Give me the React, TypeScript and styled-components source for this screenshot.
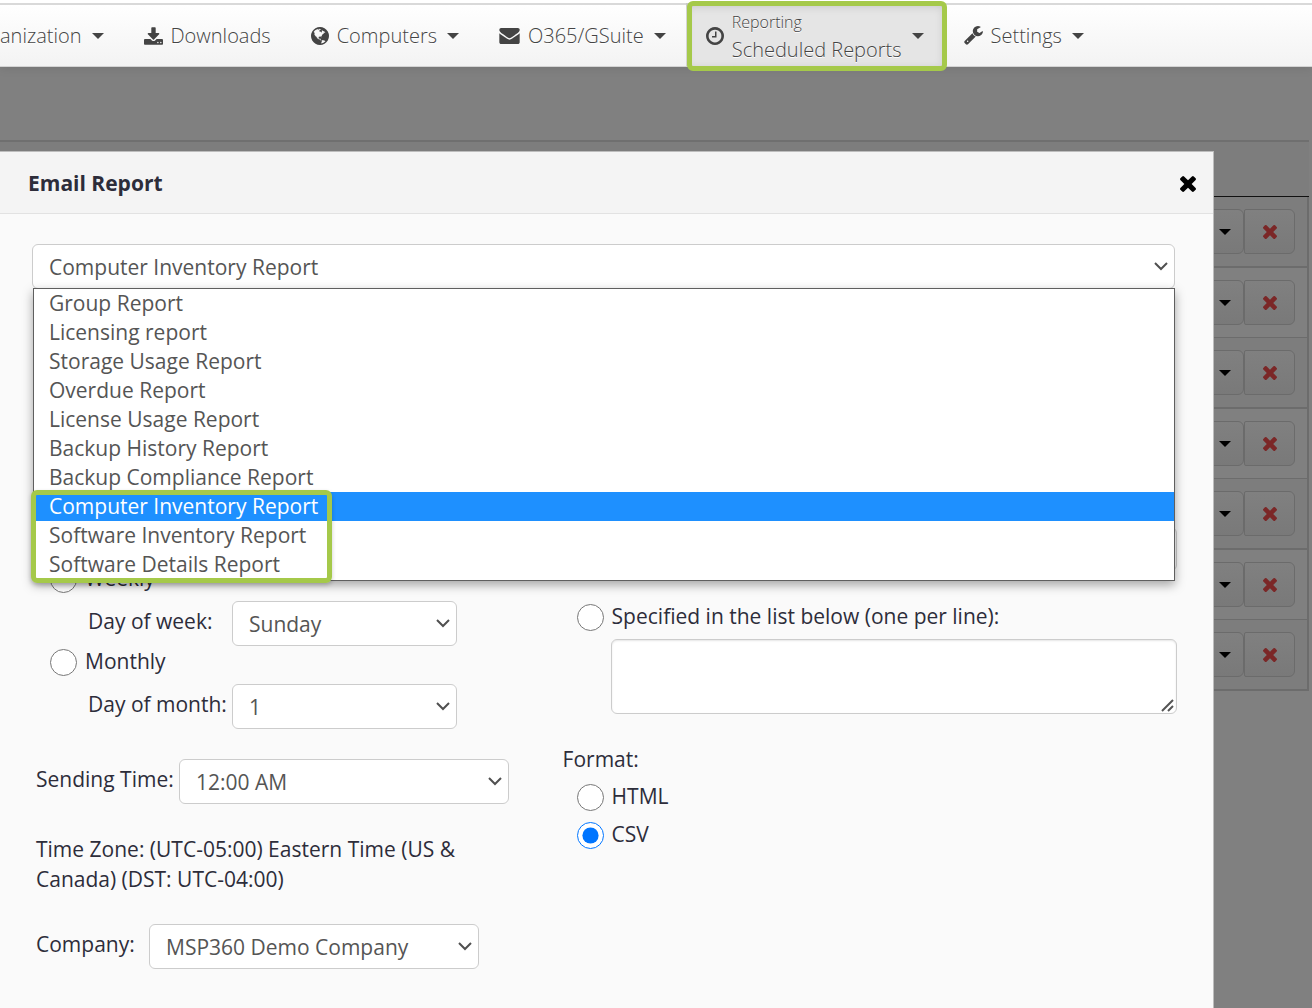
import React from "react";
import styled, { createGlobalStyle, css } from "styled-components";

const GlobalStyle = createGlobalStyle`
  *, *::before, *::after { box-sizing: border-box; }
  body { margin: 0; background: #808080; }
  body, button, input, select, textarea {
    font-family: "Open Sans", "Noto Sans", sans-serif;
    font-size: 21px;
  }
`;

const ICONS = {
  download:
    "M1344 1344q0-26-19-45t-45-19-45 19-19 45 19 45 45 19 45-19 19-45zm256 0q0-26-19-45t-45-19-45 19-19 45 19 45 45 19 45-19 19-45zm128-224v320q0 40-28 68t-68 28h-1472q-40 0-68-28t-28-68v-320q0-40 28-68t68-28h465l135 136q58 56 136 56t136-56l136-136h464q40 0 68 28t28 68zm-325-569q17 41-14 70l-448 448q-18 19-45 19t-45-19l-448-448q-31-29-14-70 17-39 59-39h256v-448q0-26 19-45t45-19h256q26 0 45 19t19 45v448h256q42 0 59 39z",
  globe:
    "M896 128q209 0 385.5 103t279.5 279.5 103 385.5-103 385.5-279.5 279.5-385.5 103-385.5-103-279.5-279.5-103-385.5 103-385.5 279.5-279.5 385.5-103zm274 521q-2 1-9.5 9.5t-13.5 9.5q2 0 4.5-5t5-11 3.5-7q6-7 22-15 14-6 52-12 34-8 51 11-2-2 9.5-13t14.5-12q3-2 15-4.5t15-7.5l2-22q-12 1-17.5-7t-6.5-21q0 2-6 8 0-7-4.5-8t-11.5 1-9 1q-10-3-15-7.5t-8-16.5-4-15q-2-5-9.5-11t-9.5-10q-1-2-2.5-5.5t-3-6.5-4-5.5-5.5-2.5-7 5-7.5 10-4.5 5q-3-2-6-1.5t-4.5 1-4.5 3-5 3.5q-3 2-8.5 3t-8.5 2q15-5-1-11-10-4-16-3 9-4 7.5-12t-8.5-14h5q-1-4-8.5-8.5t-17.5-8.5-13-6q-8-5-34-9.5t-33-.5q-5 6-4.5 10.5t4 14 3.5 12.5q1 6-5.5 13t-6.5 12q0 7 14 15.5t10 21.5q-3 8-16 16t-16 12q-5 8-1.5 18.5t10.5 16.5q2 2 1.5 4t-3.5 4.5-5.5 4-6.5 3.5l-3 2q-11 5-20.5-6t-13.5-26q-7-25-16-30-23-8-29 1-5-13-41-26-25-9-58-4 6-1 0-15-7-15-19-12 3-6 4-17.5t1-13.5q3-13 12-23 1-1 7-8.5t9.5-13.5.5-6q35 4 50-11 5-5 11.5-17t10.5-17q9-6 14-5.5t14.5 5.5 14.5 5q14 1 15.5-11t-7.5-20q12 1 3-17-4-7-8-9-12-4-27 5-8 4 2 8-1-1-9.5 10.5t-16.5 17.5-16-5q-1-1-5.5-13.5t-9.5-13.5q-8 0-16 15 3-8-11-15t-24-8q19-12-8-27-7-4-20.5-5t-19.5 4q-5 7-5.5 11.5t5 8 10.5 5.5 11.5 4 8.5 3q14 10 8 14-2 1-8.5 3.5t-11.5 4.5-6 4q-3 4 0 14t-2 14q-5-5-9-17.5t-7-16.5q7 9-25 6l-10-1q-4 0-16 2t-20.5 1-13.5-8q-4-8 0-20 1-4 4-2-4-3-11-9.5t-10-8.5q-46 15-94 41 6 1 12-1 5-2 13-6.5t10-5.5q34-14 42-7l5-5q14 16 20 25-7-4-30-1-20 6-22 12 7 12 5 18-4-3-11.5-10t-14.5-11-15-5q-16 0-22 1-146 80-235 222 7 7 12 8 4 1 5 9t2.5 11 11.5-3q9 8 3 19 1-1 44 27 19 17 21 21 3 11-10 18-1-2-9-9t-9-4q-3 5 .5 18.5t10.5 12.5q-7 0-9.5 16t-2.5 35.5-1 23.5l2 1q-3 12 5.5 34.5t21.5 19.5q-13 3 20 43 6 8 8 9 3 2 12 7.5t15 10 10 10.5q4 5 10 22.5t14 23.5q-2 6 9.5 20t10.5 23q-1 0-2.5 1t-2.5 1q3 7 15.5 14t15.5 13q1 3 2 10t3 11 8 2q2-20-24-62-15-25-17-29-3-5-5.5-15.5t-4.5-14.5q2 0 6 1.5t8.5 3.5 7.5 4 2 3q-3 7 2 17.5t12 18.5 17 19 12 13q6 6 14 19.5t0 13.5q9 0 20 10.5t17 19.5q5 8 8 26t5 24q2 7 8.5 13.5t12.5 9.5l16 8 13 7q5 2 18.5 10.5t21.5 11.5q10 4 16 4t14.5-2.5 13.5-3.5q15-2 29 15t21 21q36 19 55 11-2 1 .5 7.5t8 15.5 9 14.5 5.5 8.5q5 6 18 15t18 15q6-4 7-9-3 8 7 20t18 10q14-3 14-32-31 15-49-18 0-1-2.5-5.5t-4-8.5-2.5-8.5 0-7.5 5-3q9 0 10-3.5t-2-12.5-4-13q-1-8-11-20t-12-15q-5 9-16 8t-16-9q0 1-1.5 5.5t-1.5 6.5q-13 0-15-1 1-3 2.5-17.5t3.5-22.5q1-4 5.5-12t7.5-14.5 4-12.5-4.5-9.5-17.5-2.5q-19 1-26 20-1 3-3 10.5t-5 11.5-9 7q-7 3-24 2t-24-5q-13-8-22.5-29t-9.5-37q0-10 2.5-26.5t3-25-5.5-24.5q3-2 9-9.5t10-10.5q2-1 4.5-1.5t4.5 0 4-1.5 3-6q-1-1-4-3-3-3-4-3 7 3 28.5-1.5t27.5 1.5q15 11 22-2 0-1-2.5-9.5t-.5-13.5q5 27 29 9 3 3 15.5 5t17.5 5q3 2 7 5.5t5.5 4.5 5-.5 8.5-6.5q10 14 12 24 11 40 19 44 7 3 11 2t4.5-9.5 0-14-1.5-12.5l-1-8v-18l-1-8q-15-3-18.5-12t1.5-18.5 15-18.5q1-1 8-3.5t15.5-6.5 12.5-8q21-19 15-35 7 0 11-9-1 0-5-3t-7.5-5-4.5-2q9-5 2-16 5-3 7.5-11t7.5-10q9 12 21 2 8-8 1-16 5-7 20.5-10.5t18.5-9.5q7 2 8-2t1-12 3-12q4-5 15-9t13-5l17-11q3-4 0-4 18 2 31-11 10-11-6-20 3-6-3-9.5t-15-5.5q3-1 11.5-.5t10.5-1.5q15-10-7-16-17-5-43 12zm-163 877q206-36 351-189-3-3-12.5-4.5t-12.5-3.5q-18-7-24-8 1-7-2.5-13t-8-9-12.5-8-11-7q-2-2-7-6t-7-5.5-7.5-4.5-8.5-2-10 1l-3 1q-3 1-5.5 2.5t-5.5 3-4 3 0 2.5q-21-17-36-22-5-1-11-5.5t-10.5-7-10-1.5-11.5 7q-5 5-6 15t-2 13q-7-5 0-17.5t2-18.5q-3-6-10.5-4.5t-12 4.5-11.5 8.5-9 6.5-8.5 5.5-8.5 7.5q-3 4-6 12t-5 11q-2-4-11.5-6.5t-9.5-5.5q2 10 4 35t5 38q7 31-12 48-27 25-29 40-4 22 12 26 0 7-8 20.5t-7 21.5q0 6 2 16z",
  envelope:
    "M1792 710v794q0 66-47 113t-113 47h-1472q-66 0-113-47t-47-113v-794q44 49 101 87 362 246 497 345 57 42 92.5 65.5t94.5 48 110 24.5h2q51 0 110-24.5t94.5-48 92.5-65.5q170-123 498-345 57-39 100-87zm0-294q0 79-49 151t-122 123q-376 261-468 325-10 7-42.5 31t-54 38.5-52 32.5-57.5 27-50 9h-2q-23 0-50-9t-57.5-27-52-32.5-54-38.5-42.5-31q-91-64-262-182.5t-205-142.5q-62-42-117-115.5t-55-136.5q0-78 41.5-130t118.5-52h1472q65 0 112.5 47t47.5 113z",
  clock:
    "M1024 544v448q0 14-9 23t-23 9h-320q-14 0-23-9t-9-23v-64q0-14 9-23t23-9h224v-352q0-14 9-23t23-9h64q14 0 23 9t9 23zm416 352q0-148-73-273t-198-198-273-73-273 73-198 198-73 273 73 273 198 198 273 73 273-73 198-198 73-273zm224 0q0 209-103 385.5t-279.5 279.5-385.5 103-385.5-103-279.5-279.5-103-385.5 103-385.5 279.5-279.5 385.5-103 385.5 103 279.5 279.5 103 385.5z",
  wrench:
    "M448 1472q0-26-19-45t-45-19-45 19-19 45 19 45 45 19 45-19 19-45zm644-420l-682 682q-37 37-90 37-52 0-91-37l-106-108q-38-36-38-90 0-53 38-91l681-681q39 98 114.5 173.5t173.5 114.5zm634-435q0 39-23 106-47 134-164.5 217.5t-258.5 83.5q-185 0-316.5-131.5t-131.5-316.5 131.5-316.5 316.5-131.5q58 0 121.5 16.5t107.5 46.5q16 11 16 28t-16 28l-293 169v224l193 107q5-3 79-48.5t135.5-81 70.5-35.5q15 0 23.5 10t8.5 25z",
  times:
    "M1490 1322q0 40-28 68l-136 136q-28 28-68 28t-68-28l-294-294-294 294q-28 28-68 28t-68-28l-136-136q-28-28-28-68t28-68l294-294-294-294q-28-28-28-68t28-68l136-136q28-28 68-28t68 28l294 294 294-294q28-28 68-28t68 28l136 136q28 28 28 68t-28 68l-294 294 294 294q28 28 28 68z",
};

/* Each glyph's drawing area: x, y, width, height on the 1792 grid. */
const BOXES: Record<keyof typeof ICONS, string> = {
  download: "64 0 1664 1536",
  globe: "128 128 1536 1536",
  envelope: "0 256 1792 1408",
  clock: "128 128 1536 1536",
  wrench: "64 128 1664 1664",
  times: "302 366 1188 1188",
};

const Glyph = styled.svg`
  display: block;
  flex: none;
  fill: currentColor;
`;

function Icon({ name, width, height }: { name: keyof typeof ICONS; width: number; height: number }) {
  return (
    <Glyph width={width} height={height} viewBox={BOXES[name]} aria-hidden="true">
      <path d={ICONS[name]} />
    </Glyph>
  );
}

const Caret = styled.span`
  flex: none;
  width: 0;
  height: 0;
  border: 6px solid transparent;
  border-top-color: currentColor;
  border-bottom: 0;
`;

const Page = styled.div`
  position: relative;
  min-height: 100vh;
  overflow: hidden;
  color: #2d2d3a;
`;

const NavBar = styled.nav`
  position: relative;
  display: flex;
  height: 67px;
  border-top: 3px solid #ffffff;
  border-bottom: 1px solid #d4d4d4;
  background: linear-gradient(#ffffff, #f3f3f3);
  box-shadow: 0 1px 10px rgba(0, 0, 0, 0.1), inset 0 2px 0 #d9d9d9;
`;

const highlight = css`
  content: "";
  position: absolute;
  border: 5px solid #a5c94a;
  border-radius: 6px;
  pointer-events: none;
`;

const NavLink = styled.a<{ $active?: boolean; $first?: boolean }>`
  position: relative;
  display: flex;
  align-items: center;
  gap: 8px;
  padding: 2px 20px 0 ${(p) => (p.$first ? 0 : 20)}px;
  color: #444444;
  font-size: 20px;
  font-weight: 300;
  line-height: 28px;
  text-decoration: none;
  white-space: nowrap;
  text-shadow: 0 1px 0 #ffffff;

  ${Caret} { margin-left: 2px; }

  ${(p) =>
    p.$active &&
    css`
      background: #e5e5e5;
      box-shadow: inset 0 3px 10px rgba(0, 0, 0, 0.15);
      &::after {
        ${highlight}
        inset: -2px -3px -5px 1px;
      }
    `}
`;

const Stacked = styled.span`
  display: flex;
  flex-direction: column;
`;

const Small = styled.span`
  font-size: 16px;
`;

const ReportTable = styled.table`
  width: calc(100% - 3px);
  margin-top: 73px;
  border-collapse: separate;
  border-spacing: 0;
  border-top: 2px solid #6f6f6f;

  th {
    height: 55px;
    padding: 0;
    background: #7d7d7d;
    border-bottom: 1px solid #111111;
  }
`;

const ReportRow = styled.tr<{ $thick: boolean }>`
  background: ${(p) => (p.$thick ? "#7d7d7d" : "#808080")};

  td {
    height: ${(p) => (p.$thick ? 71 : 70)}px;
    padding: 0 12px 0 0;
    border-right: 2px solid #6c6c6c;
    border-bottom: ${(p) => (p.$thick ? 2 : 1)}px solid #6c6c6c;
  }
`;

const Actions = styled.div`
  display: flex;
  justify-content: flex-end;
`;

const RowButton = styled.button<{ $danger?: boolean }>`
  display: flex;
  align-items: center;
  justify-content: ${(p) => (p.$danger ? "center" : "flex-end")};
  width: ${(p) => (p.$danger ? 51 : 64)}px;
  height: 45px;
  padding: 0 ${(p) => (p.$danger ? 0 : 12)}px;
  border: 1px solid #6b6b6b;
  border-radius: ${(p) => (p.$danger ? "2px 6px 6px 2px" : "6px")};
  background: linear-gradient(#808080, #797979);
  color: ${(p) => (p.$danger ? "#7b2727" : "#000000")};
`;

const Dialog = styled.section`
  position: absolute;
  top: 151px;
  right: 98px;
  bottom: 0;
  left: 0;
  border: solid #bdbdbd;
  border-width: 1px 1px 0 0;
  background: #fafafa;
`;

const DialogHeader = styled.header`
  display: flex;
  align-items: center;
  justify-content: space-between;
  height: 62px;
  padding: 0 13px 0 28px;
  border-bottom: 1px solid #e2e2e2;
  background: #f4f4f4;
`;

const Title = styled.h1`
  margin: 0;
  font-size: 21px;
  font-weight: 700;
  line-height: 30px;
`;

const CloseButton = styled.button`
  padding: 6px 4px 4px;
  border: 0;
  background: none;
  color: #000000;
`;

const DialogBody = styled.form`
  padding: 30px 36px 0 32px;
`;

const SelectBox = styled.div<{ $width?: number }>`
  position: relative;
  flex: none;
  width: ${(p) => (p.$width ? `${p.$width}px` : "auto")};
`;

const SelectInput = styled.select`
  display: block;
  width: 100%;
  height: 45px;
  padding: 0 32px 0 16px;
  border: 1px solid #cccccc;
  border-radius: 6px;
  appearance: none;
  background: #ffffff;
  color: #555555;
`;

const Chevron = styled.svg`
  position: absolute;
  top: 17px;
  right: 6px;
  fill: none;
  stroke: #505050;
  stroke-width: 2;
  pointer-events: none;
`;

function Select({ id, value, width, label }: { id: string; value: string; width?: number; label?: string }) {
  return (
    <SelectBox $width={width}>
      <SelectInput id={id} aria-label={label} defaultValue={value}>
        <option>{value}</option>
      </SelectInput>
      <Chevron width="16" height="11" viewBox="0 0 16 11" aria-hidden="true">
        <path d="M2 2 8 8l6-6" />
      </Chevron>
    </SelectBox>
  );
}

const ReportPicker = styled.div`
  position: relative;
  margin-right: 2px;
`;

const OptionList = styled.ul`
  position: absolute;
  z-index: 1;
  top: 44px;
  right: 0;
  left: 1px;
  margin: 0;
  padding: 0 0 1px;
  border: 1px solid #5f5f5f;
  background: #ffffff;
  box-shadow: 0 4px 10px rgba(0, 0, 0, 0.35);
  list-style: none;

  &::after {
    ${highlight}
    bottom: -3px;
    left: -3px;
    width: 301px;
    height: 93px;
    box-shadow: 0 2px 4px rgba(0, 0, 0, 0.2);
  }
`;

const Option = styled.li<{ $selected: boolean }>`
  padding: 0 15px;
  background: ${(p) => (p.$selected ? "#1e90ff" : "transparent")};
  color: ${(p) => (p.$selected ? "#ffffff" : "#555555")};
  line-height: 29px;
`;

const Columns = styled.div`
  display: grid;
  grid-template-columns: 6fr 7fr;
  align-items: start;
  margin: 238px 0 0 4px;
`;

const Schedule = styled.div`
  display: flex;
  flex-direction: column;
  gap: 30px;
  padding: 36px 52px 0 0;
`;

const Recipients = styled.div`
  display: flex;
  flex-direction: column;
  gap: 30px;
`;

const Group = styled.div`
  display: flex;
  flex-direction: column;
`;

const RadioLabel = styled.label`
  display: flex;
  align-items: center;
  gap: 8px;
  height: 38px;
  padding: 0 0 6px 14px;
  line-height: 30px;

  input {
    flex: none;
    width: 27px;
    height: 27px;
    margin: 0;
  }

  span { padding-bottom: 2px; }
`;

function Radio({ name, label, checked }: { name: string; label: string; checked?: boolean }) {
  return (
    <RadioLabel>
      <input type="radio" name={name} defaultChecked={checked} />
      <span>{label}</span>
    </RadioLabel>
  );
}

const Field = styled.div<{ $indent?: boolean }>`
  display: flex;
  align-items: center;
  padding-left: ${(p) => (p.$indent ? 52 : 0)}px;
`;

const FieldLabel = styled.label<{ $width: number }>`
  flex: none;
  width: ${(p) => p.$width}px;
  padding-bottom: 6px;
  line-height: 30px;
  white-space: nowrap;
`;

const Paragraph = styled.p`
  margin: 0;
  line-height: 30px;
`;

const boxed = css`
  display: block;
  width: 100%;
  border: 1px solid #cccccc;
  border-radius: 6px;
  background: #ffffff;
  box-shadow: inset 0 1px 2px rgba(0, 0, 0, 0.1);
`;

const Inset = styled.div`
  position: relative;
  padding-left: 48px;
`;

const EmailInput = styled.input`
  ${boxed}
  height: 44px;
`;

const EmailList = styled.textarea`
  ${boxed}
  height: 75px;
  resize: none;
`;

const Grip = styled.svg`
  position: absolute;
  right: 3px;
  bottom: 2px;
  fill: none;
  stroke: #555555;
  pointer-events: none;
`;

const FormatGroup = styled.fieldset`
  min-width: 0;
  margin: 0;
  padding: 0;
  border: 0;
`;

const FormatLegend = styled.legend`
  padding: 0 0 7px;
  line-height: 30px;
`;

const REPORTS = [
  "Group Report",
  "Licensing report",
  "Storage Usage Report",
  "Overdue Report",
  "License Usage Report",
  "Backup History Report",
  "Backup Compliance Report",
  "Computer Inventory Report",
  "Software Inventory Report",
  "Software Details Report",
];

const SELECTED = "Computer Inventory Report";

export default function App() {
  return (
    <Page>
      <GlobalStyle />
      <NavBar>
        <NavLink href="#" $first>
          anization <Caret />
        </NavLink>
        <NavLink href="#">
          <Icon name="download" width={19} height={18} /> Downloads
        </NavLink>
        <NavLink href="#">
          <Icon name="globe" width={18} height={18} /> Computers <Caret />
        </NavLink>
        <NavLink href="#">
          <Icon name="envelope" width={21} height={16} /> O365/GSuite <Caret />
        </NavLink>
        <NavLink href="#" $active>
          <Icon name="clock" width={18} height={18} />
          <Stacked>
            <Small>Reporting</Small>
            <span>Scheduled Reports</span>
          </Stacked>
          <Caret />
        </NavLink>
        <NavLink href="#">
          <Icon name="wrench" width={19} height={19} /> Settings <Caret />
        </NavLink>
      </NavBar>

      <ReportTable>
        <thead>
          <tr>
            <th />
          </tr>
        </thead>
        <tbody>
          {[0, 1, 2, 3, 4, 5, 6].map((row) => (
            <ReportRow key={row} $thick={row % 2 === 0}>
              <td>
                <Actions>
                  <RowButton type="button">
                    <Caret />
                  </RowButton>
                  <RowButton type="button" $danger>
                    <Icon name="times" width={14} height={14} />
                  </RowButton>
                </Actions>
              </td>
            </ReportRow>
          ))}
        </tbody>
      </ReportTable>

      <Dialog role="dialog" aria-labelledby="dialog-title">
        <DialogHeader>
          <Title id="dialog-title">Email Report</Title>
          <CloseButton type="button">
            <Icon name="times" width={16} height={16} />
          </CloseButton>
        </DialogHeader>
        <DialogBody>
          <ReportPicker>
            <Select id="report" value={SELECTED} />
            <OptionList role="listbox">
              {REPORTS.map((name) => (
                <Option key={name} role="option" aria-selected={name === SELECTED} $selected={name === SELECTED}>
                  {name}
                </Option>
              ))}
            </OptionList>
          </ReportPicker>

          <Columns>
            <Schedule>
              <Group>
                <Radio name="period" label="Weekly" />
                <Field $indent>
                  <FieldLabel htmlFor="weekday" $width={144}>Day of week:</FieldLabel>
                  <Select id="weekday" value="Sunday" width={225} />
                </Field>
                <Radio name="period" label="Monthly" />
                <Field $indent>
                  <FieldLabel htmlFor="monthday" $width={144}>Day of month:</FieldLabel>
                  <Select id="monthday" value="1" width={225} />
                </Field>
              </Group>
              <Field>
                <FieldLabel htmlFor="time" $width={143}>Sending Time:</FieldLabel>
                <Select id="time" value="12:00 AM" width={330} />
              </Field>
              <Paragraph>Time Zone: (UTC-05:00) Eastern Time (US &amp; Canada) (DST: UTC-04:00)</Paragraph>
              <Field>
                <FieldLabel htmlFor="company" $width={113}>Company:</FieldLabel>
                <Select id="company" value="MSP360 Demo Company" width={330} />
              </Field>
            </Schedule>

            <Recipients>
              <Inset>
                <EmailInput type="email" />
              </Inset>
              <Group>
                <Radio name="recipients" label="Specified in the list below (one per line):" />
                <Inset>
                  <EmailList />
                  <Grip width="13" height="13" viewBox="0 0 13 13" aria-hidden="true">
                    <path d="M1 12 12 1M7 12l5-5" strokeWidth="2" />
                  </Grip>
                </Inset>
              </Group>
              <FormatGroup>
                <FormatLegend>Format:</FormatLegend>
                <Radio name="format" label="HTML" />
                <Radio name="format" label="CSV" checked />
              </FormatGroup>
            </Recipients>
          </Columns>
        </DialogBody>
      </Dialog>
    </Page>
  );
}
